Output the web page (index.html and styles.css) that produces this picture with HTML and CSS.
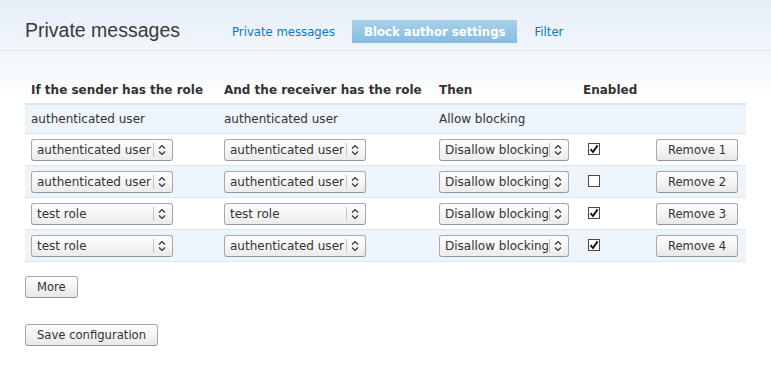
FILE: index.html
```html
<!DOCTYPE html>
<html lang="en">

<head>
    <meta charset="UTF-8" />
    <title>Block author settings | Private messages</title>
    <link rel="stylesheet" href="styles.css">
</head>

<body>
    <div class="branding">
        <h1 class="page-title">Private messages</h1>
        <ul class="tabs">
            <li><a href="#">Private messages</a></li>
            <li class="active"><a href="#">Block author settings</a></li>
            <li><a href="#">Filter</a></li>
        </ul>
    </div>

    <div class="page">
        <form class="block-form">
            <table class="rules">
                <colgroup>
                    <col class="col-sender">
                    <col class="col-receiver">
                    <col class="col-action">
                    <col class="col-enabled">
                    <col class="col-remove">
                </colgroup>
                <thead>
                    <tr>
                        <th>If the sender has the role</th>
                        <th>And the receiver has the role</th>
                        <th>Then</th>
                        <th>Enabled</th>
                        <th></th>
                    </tr>
                </thead>
                <tbody>
                    <tr class="fixed">
                        <td>authenticated user</td>
                        <td>authenticated user</td>
                        <td>Allow blocking</td>
                        <td></td>
                        <td></td>
                    </tr>
                    <!-- rows 1..4 -->
                    <tr>
                        <td>
                            <span class="select-wrap">
                                <select><option selected>authenticated user</option><option>test role</option></select>
                                <svg class="arrows" viewBox="0 0 8 12"><polyline points="1,4.5 4,1.5 7,4.5" /><polyline points="1,7.5 4,10.5 7,7.5" /></svg>
                            </span>
                        </td>
                        <td>
                            <span class="select-wrap">
                                <select><option selected>authenticated user</option><option>test role</option></select>
                                <svg class="arrows" viewBox="0 0 8 12"><polyline points="1,4.5 4,1.5 7,4.5" /><polyline points="1,7.5 4,10.5 7,7.5" /></svg>
                            </span>
                        </td>
                        <td>
                            <span class="select-wrap narrow">
                                <select><option>Allow blocking</option><option selected>Disallow blocking</option></select>
                                <svg class="arrows" viewBox="0 0 8 12"><polyline points="1,4.5 4,1.5 7,4.5" /><polyline points="1,7.5 4,10.5 7,7.5" /></svg>
                            </span>
                        </td>
                        <td>
                            <label class="check"><input type="checkbox" checked><svg viewBox="0 0 12 12"><rect x="0.5" y="0.5" width="11" height="11" /><path class="tick" d="M2.6 6.2 L5 9 L9.6 2.4" /></svg></label>
                        </td>
                        <td><button type="button" class="form-submit">Remove 1</button></td>
                    </tr>
                    <tr>
                        <td>
                            <span class="select-wrap">
                                <select><option selected>authenticated user</option><option>test role</option></select>
                                <svg class="arrows" viewBox="0 0 8 12"><polyline points="1,4.5 4,1.5 7,4.5" /><polyline points="1,7.5 4,10.5 7,7.5" /></svg>
                            </span>
                        </td>
                        <td>
                            <span class="select-wrap">
                                <select><option selected>authenticated user</option><option>test role</option></select>
                                <svg class="arrows" viewBox="0 0 8 12"><polyline points="1,4.5 4,1.5 7,4.5" /><polyline points="1,7.5 4,10.5 7,7.5" /></svg>
                            </span>
                        </td>
                        <td>
                            <span class="select-wrap narrow">
                                <select><option>Allow blocking</option><option selected>Disallow blocking</option></select>
                                <svg class="arrows" viewBox="0 0 8 12"><polyline points="1,4.5 4,1.5 7,4.5" /><polyline points="1,7.5 4,10.5 7,7.5" /></svg>
                            </span>
                        </td>
                        <td>
                            <label class="check"><input type="checkbox"><svg viewBox="0 0 12 12"><rect x="0.5" y="0.5" width="11" height="11" /><path class="tick" d="M2.6 6.2 L5 9 L9.6 2.4" /></svg></label>
                        </td>
                        <td><button type="button" class="form-submit">Remove 2</button></td>
                    </tr>
                    <tr>
                        <td>
                            <span class="select-wrap">
                                <select><option>authenticated user</option><option selected>test role</option></select>
                                <svg class="arrows" viewBox="0 0 8 12"><polyline points="1,4.5 4,1.5 7,4.5" /><polyline points="1,7.5 4,10.5 7,7.5" /></svg>
                            </span>
                        </td>
                        <td>
                            <span class="select-wrap">
                                <select><option>authenticated user</option><option selected>test role</option></select>
                                <svg class="arrows" viewBox="0 0 8 12"><polyline points="1,4.5 4,1.5 7,4.5" /><polyline points="1,7.5 4,10.5 7,7.5" /></svg>
                            </span>
                        </td>
                        <td>
                            <span class="select-wrap narrow">
                                <select><option>Allow blocking</option><option selected>Disallow blocking</option></select>
                                <svg class="arrows" viewBox="0 0 8 12"><polyline points="1,4.5 4,1.5 7,4.5" /><polyline points="1,7.5 4,10.5 7,7.5" /></svg>
                            </span>
                        </td>
                        <td>
                            <label class="check"><input type="checkbox" checked><svg viewBox="0 0 12 12"><rect x="0.5" y="0.5" width="11" height="11" /><path class="tick" d="M2.6 6.2 L5 9 L9.6 2.4" /></svg></label>
                        </td>
                        <td><button type="button" class="form-submit">Remove 3</button></td>
                    </tr>
                    <tr>
                        <td>
                            <span class="select-wrap">
                                <select><option>authenticated user</option><option selected>test role</option></select>
                                <svg class="arrows" viewBox="0 0 8 12"><polyline points="1,4.5 4,1.5 7,4.5" /><polyline points="1,7.5 4,10.5 7,7.5" /></svg>
                            </span>
                        </td>
                        <td>
                            <span class="select-wrap">
                                <select><option selected>authenticated user</option><option>test role</option></select>
                                <svg class="arrows" viewBox="0 0 8 12"><polyline points="1,4.5 4,1.5 7,4.5" /><polyline points="1,7.5 4,10.5 7,7.5" /></svg>
                            </span>
                        </td>
                        <td>
                            <span class="select-wrap narrow">
                                <select><option>Allow blocking</option><option selected>Disallow blocking</option></select>
                                <svg class="arrows" viewBox="0 0 8 12"><polyline points="1,4.5 4,1.5 7,4.5" /><polyline points="1,7.5 4,10.5 7,7.5" /></svg>
                            </span>
                        </td>
                        <td>
                            <label class="check"><input type="checkbox" checked><svg viewBox="0 0 12 12"><rect x="0.5" y="0.5" width="11" height="11" /><path class="tick" d="M2.6 6.2 L5 9 L9.6 2.4" /></svg></label>
                        </td>
                        <td><button type="button" class="form-submit">Remove 4</button></td>
                    </tr>
                </tbody>
            </table>

            <div class="more-row">
                <button type="button" class="form-submit">More</button>
            </div>

            <div class="form-actions">
                <button type="submit" class="form-submit">Save configuration</button>
            </div>
        </form>
    </div>
</body>

</html>
```

FILE: styles.css
```css
body {
    margin: 0;
    padding: 0;
    font-family: "DejaVu Sans", Verdana, sans-serif;
    font-size: 12px;
    color: #333;
    background: #fff;
}

/* top bar with title and tabs */
.branding {
    height: 31px;
    padding: 19px 0 0 25px;
    display: flex;
    align-items: flex-start;
    background: linear-gradient(#e6eef8, #f1f6fb);
    border-bottom: 1px solid #dfe7ef;
}

.page-title {
    margin: 0 40px 0 0;
    font-family: "Liberation Sans", Arial, sans-serif;
    font-size: 19.5px;
    font-weight: normal;
    line-height: 23px;
    color: #3a3a3a;
}

.tabs {
    list-style: none;
    margin: 1px 0 0;
    padding: 0;
    display: flex;
}

.tabs li {
    margin-right: 5px;
}

.tabs a {
    display: block;
    padding: 1px 12px 0;
    font-size: 11.7px;
    line-height: 22px;
    color: #0b78c3;
    text-decoration: none;
}

.tabs li.active a {
    font-weight: bold;
    color: #fff;
    background: linear-gradient(#a9d1ea, #86bce0);
}

.page {
    padding: 26px 25px 0;
    background: linear-gradient(#f1f6fb, #fff 50px);
}

/* rules table */
.rules {
    width: 721px;
    border-collapse: collapse;
}

.col-sender { width: 193px; }
.col-receiver { width: 215px; }
.col-action { width: 144px; }
.col-enabled { width: 73px; }
.col-remove { width: 96px; }

.rules th {
    padding: 4px 6px;
    text-align: left;
    font-weight: bold;
    line-height: 18px;
    border-bottom: 2px solid #d6e7f4;
}

.rules td {
    padding: 5px 6px 4px;
    line-height: 18px;
    border-bottom: 1px solid #dbe8f3;
    vertical-align: top;
}

.rules tr.fixed td {
    padding: 5px 6px;
}

.rules tbody tr:nth-child(odd) {
    background-color: #edf5fb;
}

/* select boxes */
.select-wrap {
    position: relative;
    display: block;
    width: 142px;
    height: 22px;
}

.select-wrap.narrow {
    width: 130px;
}

.select-wrap select {
    appearance: none;
    -webkit-appearance: none;
    box-sizing: border-box;
    width: 100%;
    height: 22px;
    margin: 0;
    padding: 0 20px 0 5px;
    border: 1px solid #a8a8a8;
    border-bottom-color: #969696;
    border-radius: 3px;
    background: linear-gradient(#fff, #ececec);
    font-family: "DejaVu Sans", Verdana, sans-serif;
    font-size: 12px;
    color: #333;
}

.select-wrap::after {
    content: "";
    position: absolute;
    right: 19px;
    top: 4px;
    bottom: 4px;
    width: 1px;
    background: #c4c4c4;
}

.select-wrap .arrows {
    position: absolute;
    right: 7px;
    top: 5px;
    width: 8px;
    height: 12px;
    fill: none;
    stroke: #333;
    stroke-width: 1.2;
    pointer-events: none;
}

/* checkboxes */
.check {
    display: block;
    width: 12px;
    height: 12px;
    margin: 4px 0 0 5px;
    cursor: pointer;
}

.check input {
    display: none;
}

.check svg {
    display: block;
    width: 12px;
    height: 12px;
}

.check rect {
    fill: #fff;
    stroke: #4a4a4a;
}

.check .tick {
    fill: none;
    stroke: #111;
    stroke-width: 1.9;
    display: none;
}

.check input:checked + svg .tick {
    display: inline;
}

/* buttons */
.form-submit {
    box-sizing: border-box;
    height: 22px;
    margin: 0;
    padding: 0 11px;
    border: 1px solid #a8a8a8;
    border-bottom-color: #939393;
    border-radius: 3px;
    background: linear-gradient(#fff, #e8e8e8);
    font-family: "DejaVu Sans", Verdana, sans-serif;
    font-size: 11.6px;
    color: #333;
    white-space: nowrap;
    cursor: pointer;
}

.rules .form-submit {
    display: block;
    width: 82px;
    padding: 0;
}

.more-row {
    margin-top: 14px;
}

.form-actions {
    margin-top: 26px;
}
```
